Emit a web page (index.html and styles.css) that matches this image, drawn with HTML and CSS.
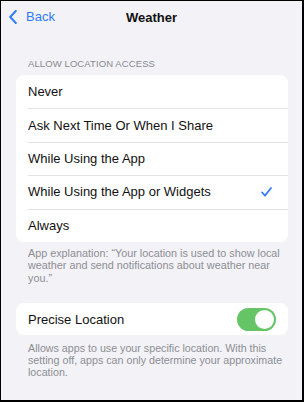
FILE: index.html
```html
<!DOCTYPE html>
<html lang="en">
<head>
<meta charset="utf-8">
<title>Weather</title>
<link rel="stylesheet" href="styles.css">
</head>
<body>
<div class="frame">
  <header class="nav">
    <a class="back">
      <svg class="chev" width="8" height="14" viewBox="0 0 8 14"><path d="M6.8 1 L1.2 7 L6.8 13" fill="none" stroke="#2f7cf6" stroke-width="1.9" stroke-linecap="round" stroke-linejoin="round"/></svg>
      <span>Back</span>
    </a>
    <div class="title">Weather</div>
  </header>

  <div class="section-header">Allow Location Access</div>
  <ul class="card list">
    <li class="row">Never</li>
    <li class="row">Ask Next Time Or When I Share</li>
    <li class="row">While Using the App</li>
    <li class="row">While Using the App or Widgets
      <svg class="check" width="11" height="10" viewBox="0 0 11 10"><path d="M1 5.3 L4 8.6 L10 1" fill="none" stroke="#2f7cf6" stroke-width="1.7" stroke-linecap="round" stroke-linejoin="round"/></svg>
    </li>
    <li class="row">Always</li>
  </ul>
  <p class="footer first">App explanation: “Your location is used to show local weather and send notifications about weather near you.”</p>

  <div class="card single">
    <div class="row toggle-row">Precise Location
      <span class="toggle"><span class="knob"></span></span>
    </div>
  </div>
  <p class="footer second">Allows apps to use your specific location. With this setting off, apps can only determine your approximate location.</p>
</div>
</body>
</html>
```

FILE: styles.css
```css
* { box-sizing: border-box; }
html, body { margin: 0; padding: 0; }
body {
  font-family: "Liberation Sans", Arial, sans-serif;
  color: #111;
}
.frame {
  width: 304px;
  height: 402px;
  background: #f2f2f7;
  border-style: solid;
  border-color: #000;
  border-width: 1px 2px 2px 1px;
  overflow: hidden;
}
.nav {
  height: 31px;
  display: flex;
  align-items: center;
  justify-content: center;
  position: relative;
}
.back {
  position: absolute;
  left: 8px;
  top: 8px;
  display: flex;
  align-items: center;
  gap: 9px;
  color: #2f7cf6;
  font-size: 13px;
}
.title {
  font-size: 13px;
  font-weight: bold;
  padding-top: 1px;
}
.section-header {
  margin: 26px 0 0 27px;
  font-size: 9.5px;
  text-transform: uppercase;
  color: #8a8a8e;
  letter-spacing: 0.1px;
  line-height: 12px;
}
.card {
  margin: 5px 14px 0 15px;
  background: #fff;
  border-radius: 8px;
  list-style: none;
  padding: 0;
}
.list { margin-top: 5px; }
.row {
  height: 33.4px;
  display: flex;
  align-items: center;
  justify-content: space-between;
  padding: 0 16px 0 12px;
  font-size: 13px;
  position: relative;
}
.list .row + .row::before {
  content: "";
  position: absolute;
  left: 12px;
  right: 0;
  top: 0;
  height: 1px;
  background: #e3e3e6;
}
.footer {
  margin: 5px 12px 0 27px;
  font-size: 10.8px;
  line-height: 12.4px;
  color: #8e8e93;
}
.single { margin-top: 19px; }
.toggle-row {
  height: 32px;
  padding-right: 12px;
}
.toggle {
  width: 39px;
  height: 23px;
  border-radius: 12px;
  background: #65c466;
  display: flex;
  align-items: center;
  justify-content: flex-end;
  padding: 2px;
}
.knob {
  width: 19px;
  height: 19px;
  border-radius: 50%;
  background: #fff;
}
.footer.second {
  margin-top: 7px;
  font-size: 10.7px;
  line-height: 12px;
}
```
